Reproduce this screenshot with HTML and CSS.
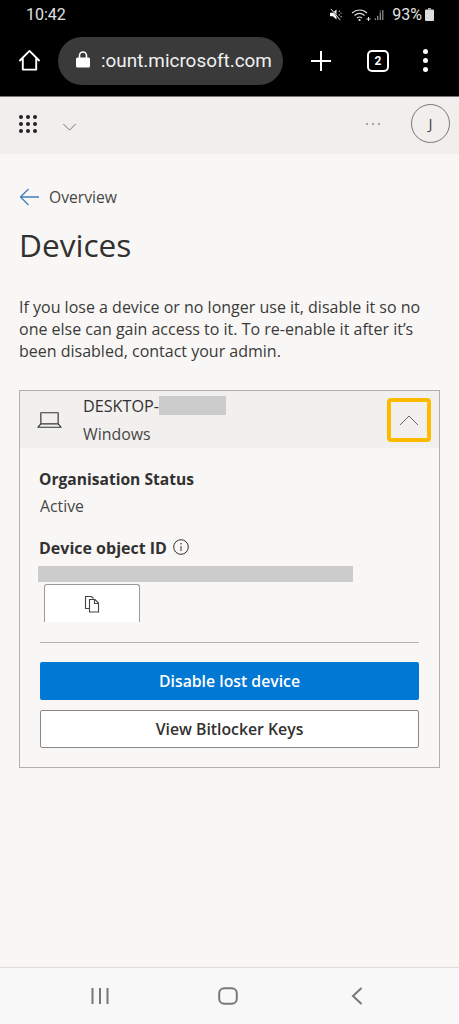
FILE: index.html
```html
<!DOCTYPE html>
<html lang="en">
<head>
<meta charset="utf-8">
<title>Devices</title>
<link rel="stylesheet" href="styles.css">
</head>
<body>
<div class="phone">
  <div class="chrome">
    <div class="status">
      <span class="time">10:42</span>
      <div class="status-right">
        <svg class="st-mute" viewBox="0 0 16 14"><path d="M1 5h3l4-3.500v11l-4-3.500H1z" fill="#fff"/><path d="M2 1l10 12" stroke="#000" stroke-width="1.500"/><path d="M2 1l10 12" stroke="#fff" stroke-width="1"/><path d="M11 3v1M13 5v1M11 7v1M13 9v1" stroke="#fff" stroke-width="1.200"/></svg>
        <svg class="st-wifi" viewBox="0 0 20 14"><path d="M1 5c4.500-4 11-4 15 0M3.500 7.500c3-2.500 7-2.500 10 0M6 10c1.700-1.300 3.300-1.300 5 0" fill="none" stroke="#ddd" stroke-width="1.100"/><circle cx="8.500" cy="12" r="1.100" fill="#ddd"/><path d="M17.500 9v4M15.500 11h4" stroke="#ddd" stroke-width="1"/></svg>
        <svg class="st-sig" viewBox="0 0 12 14"><path d="M1.500 13v-2M4.500 13V8M7.500 13V4M10.500 13V1" stroke="#ccc" stroke-width="1.100"/><path d="M7.500 4V1M10.500 13V1" stroke="#666" stroke-width="1.100"/></svg>
        <span class="pct">93%</span>
        <svg class="st-bat" viewBox="0 0 9 13"><path d="M3 0h3v1.500H3z" fill="#aaa"/><rect x="0" y="1.500" width="9" height="11.500" rx="1" fill="#ddd"/></svg>
      </div>
    </div>
    <div class="toolbar">
      <svg class="home" viewBox="0 0 24 24"><path d="M1.500 12.500L12 2l10.500 10.500M5 10v11.500h14V10" fill="none" stroke="#fff" stroke-width="2" stroke-linejoin="round"/></svg>
      <div class="url">
        <svg class="lock" viewBox="0 0 14 17"><path d="M3.500 7V4.500a3.500 3.500 0 0 1 7 0V7" fill="none" stroke="#fff" stroke-width="1.600"/><rect y="6.500" width="14" height="10" rx="1.500" fill="#fff"/></svg>
        <span class="url-text">:ount.microsoft.com</span>
      </div>
      <svg class="plus" viewBox="0 0 20 20"><path d="M10 0v20M0 10h20" stroke="#fff" stroke-width="2"/></svg>
      <div class="tabs">2</div>
      <div class="kebab"><i></i><i></i><i></i></div>
    </div>
  </div>

  <header class="appbar">
    <div class="waffle"><i></i><i></i><i></i><i></i><i></i><i></i><i></i><i></i><i></i></div>
    <svg class="chev-down" viewBox="0 0 16 9"><path d="M1 1l7 7 7-7" fill="none" stroke="#666" stroke-width="1"/></svg>
    <span class="more"><i></i><i></i><i></i></span>
    <div class="avatar">J</div>
  </header>

  <main class="page">
    <a class="back">
      <svg class="arrow" viewBox="0 0 20 18"><path d="M9.500 1L1.500 9l8 8M1.500 9H20" fill="none" stroke="#3f7fb8" stroke-width="1.300"/></svg>
      <span>Overview</span>
    </a>
    <h1>Devices</h1>
    <p class="intro">If you lose a device or no longer use it, disable it so no one else can gain access to it. To re-enable it after it’s been disabled, contact your admin.</p>

    <section class="card">
      <div class="card-head">
        <svg class="laptop" viewBox="0 0 26 18"><path d="M4 13V1.500h18V13M1 16.500h24l-3-3.500H4z" fill="none" stroke="#333" stroke-width="1.200" stroke-linejoin="round"/></svg>
        <div class="dev">
          <div class="dev-name">DESKTOP-<span class="redact-name"></span></div>
          <div class="dev-os">Windows</div>
        </div>
        <div class="focus">
          <svg class="chev-up" viewBox="0 0 20 11"><path d="M1 10l9-9 9 9" fill="none" stroke="#666" stroke-width="1"/></svg>
        </div>
      </div>
      <div class="card-body">
        <div class="label">Organisation Status</div>
        <div class="value">Active</div>
        <div class="label id-label">Device object ID
          <svg class="info" viewBox="0 0 16 16"><circle cx="8" cy="8" r="7.300" fill="none" stroke="#333" stroke-width="1"/><path d="M8 7v5" stroke="#333" stroke-width="1"/><circle cx="8" cy="4.700" r=".8" fill="#333"/></svg>
        </div>
        <div class="redact-id"></div>
        <div class="copy">
          <svg class="copy-icon" viewBox="0 0 16 18"><path d="M5.500 13.500H1.500V1.500h6l2 2" fill="none" stroke="#444" stroke-width="1.100"/><path d="M5.500 4.500h5.500l3.500 3.500v9h-9zM10.500 4.500V8.500h4" fill="none" stroke="#444" stroke-width="1.100"/></svg>
        </div>
        <hr class="rule">
        <button class="btn primary">Disable lost device</button>
        <button class="btn secondary">View Bitlocker Keys</button>
      </div>
    </section>
  </main>

  <nav class="navbar">
    <svg class="nav-recent" viewBox="0 0 18 18"><path d="M1.500 1v16M9 1v16M16.500 1v16" stroke="#777" stroke-width="2"/></svg>
    <svg class="nav-home" viewBox="0 0 20 18"><rect x="1.200" y="1.200" width="17.600" height="15.600" rx="5" fill="none" stroke="#777" stroke-width="2"/></svg>
    <svg class="nav-back" viewBox="0 0 12 18"><path d="M10.500 1L2 9l8.500 8" fill="none" stroke="#777" stroke-width="2"/></svg>
  </nav>
</div>
</body>
</html>
```
FILE: styles.css
```css
* { box-sizing: border-box; }
html, body { margin: 0; padding: 0; }
body { background: #f8f7f6; font-family: "Open Sans", "Noto Sans", sans-serif; color: #323130; }
.phone { width: 459px; height: 1024px; display: flex; flex-direction: column; overflow: hidden; }

.chrome { background: #000; height: 97px; flex: none; border-bottom: 1px solid #777; color: #fff; }
.status { height: 31px; display: flex; align-items: center; justify-content: space-between; padding: 0 25px 2px 26px; }
.time { font: 16px/18px Roboto, sans-serif; color: #e0e0e0; }
.status-right { display: flex; align-items: center; gap: 3px; }
.st-mute { width: 15px; height: 13px; margin-right: 4px; }
.st-wifi { width: 20px; height: 14px; }
.st-sig { width: 10px; height: 14px; margin-right: 5px; }
.pct { font: 16px/18px Roboto, sans-serif; color: #e0e0e0; }
.st-bat { width: 9px; height: 13px; margin-left: 0; }

.toolbar { height: 65px; display: flex; align-items: center; padding: 0 0 6px 18px; }
.home { width: 23px; height: 23px; flex: none; }
.url { width: 225px; height: 48px; margin-left: 17px; border-radius: 24px; background: #3a3a3a; display: flex; align-items: center; padding-left: 18px; flex: none; }
.lock { width: 14px; height: 17px; flex: none; margin-top: -2px; }
.url-text { margin-left: 11px; font: 18.900px/24px Roboto, sans-serif; color: #f0f0f0; white-space: nowrap; }
.plus { width: 20px; height: 20px; margin-left: 28px; flex: none; }
.tabs { width: 22px; height: 22px; margin-left: 36px; border: 2px solid #fff; border-radius: 5px; font: 700 12px/18px Roboto, sans-serif; text-align: center; flex: none; }
.kebab { margin-left: 34px; display: flex; flex-direction: column; gap: 4px; }
.kebab i { display: block; width: 5px; height: 5px; border-radius: 50%; background: #fff; }

.appbar { height: 57px; flex: none; background: #f0efee; display: flex; align-items: center; padding: 0 9px 0 19px; }
.waffle { display: grid; grid-template-columns: repeat(3, 4px); gap: 3px; margin-top: -4px; }
.waffle i { width: 4px; height: 4px; border-radius: 50%; background: #222; }
.chev-down { width: 15px; height: 8px; margin-left: 25px; margin-top: 3px; }
.more { margin-left: auto; margin-right: 31px; margin-top: -4px; display: flex; gap: 4px; }
.more i { width: 2px; height: 2px; border-radius: 50%; background: #888; }
.avatar { width: 39px; height: 39px; border: 1px solid #777; border-radius: 50%; font: 15px/37px "Open Sans", sans-serif; text-align: center; color: #444; margin-top: -4px; }

.page { flex: 1; padding: 32px 19px 0; background: #f8f7f6; }
.back { display: flex; align-items: center; height: 22px; font-size: 15.700px; color: #484644; }
.arrow { width: 20px; height: 18px; margin-right: 10px; }
h1 { margin: 12px 0 0; font: 400 31.600px/50px "Open Sans", sans-serif; color: #323130; }
.intro { margin: 26px 0 0; width: 410px; font-size: 16px; line-height: 22px; color: #3b3a39; }

.card { margin-top: 28px; width: 421px; height: 378px; border: 1px solid #b0afae; }
.card-head { height: 57px; background: #f1f0ef; display: flex; align-items: center; padding-left: 17px; }
.laptop { width: 25px; height: 18px; flex: none; }
.dev { margin-left: 21px; }
.dev-name { display: flex; align-items: center; font-size: 16.200px; line-height: 20px; height: 20px; color: #323130; }
.redact-name { display: block; width: 67px; height: 19px; background: #cdcccc; }
.dev-os { margin-top: 8px; font-size: 15.900px; line-height: 20px; color: #484644; }
.focus { margin-left: auto; margin-right: 8px; width: 44px; height: 44px; border: 4px solid #fdbb00; border-radius: 4px; display: flex; align-items: center; justify-content: center; flex: none; }
.chev-up { width: 20px; height: 11px; margin-top: 1px; }

.card-body { padding: 21px 20px 0 20px; }
.label { margin-left: -1px; font-weight: 700; font-size: 15.800px; line-height: 20px; color: #323130; }
.label:first-child { font-size: 15.600px; }
.value { margin-top: 7px; font-size: 15.800px; line-height: 20px; color: #484644; }
.id-label { margin-top: 22px; display: flex; align-items: center; gap: 6px; font-size: 16px; }
.info { width: 16px; height: 16px; margin-top: -3px; }
.redact-id { margin: 8px 0 0 -2px; width: 315px; height: 16px; background: #cdcccc; }
.copy { margin: 2px 0 0 4px; width: 96px; height: 38px; background: #fff; border: 1px solid #9a9998; border-bottom: 0; border-radius: 3px 3px 0 0; display: flex; align-items: center; justify-content: center; }
.copy-icon { width: 16px; height: 18px; }
.rule { margin: 20px 0 0; border: 0; height: 1px; background: #b5b4b3; }
.btn { display: block; width: 100%; height: 38px; font: 600 15.800px/20px "Open Sans", sans-serif; }
.primary { margin-top: 19px; background: #0078d4; color: #fff; border: 0; border-radius: 2px; }
.secondary { margin-top: 10px; background: #fff; color: #323130; border: 1px solid #8a8886; border-radius: 2px; }

.navbar { height: 57px; flex: none; background: #f9f8f8; border-top: 1px solid #dedddc; display: flex; align-items: center; padding: 0 0 1px 91px; }
.nav-recent { width: 18px; height: 18px; }
.nav-home { width: 20px; height: 18px; margin-left: 109px; }
.nav-back { width: 12px; height: 18px; margin-left: 113px; }
```
